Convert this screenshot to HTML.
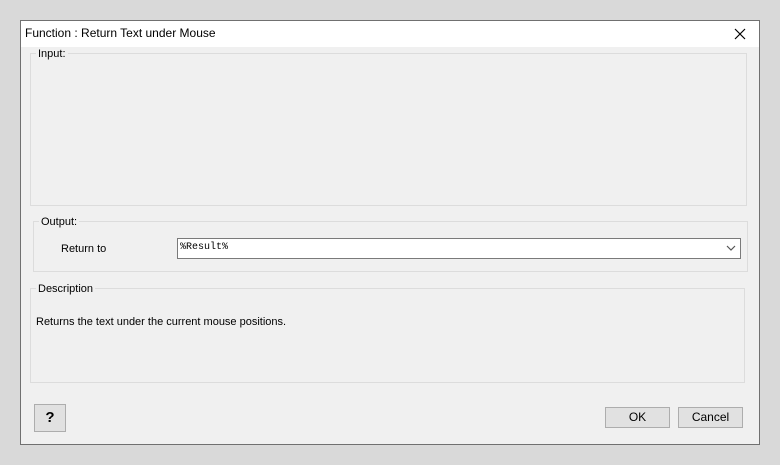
<!DOCTYPE html>
<html><head><style>
*{margin:0;padding:0;box-sizing:border-box}
body{width:780px;height:465px;background:#d9d9d9;position:relative;overflow:hidden;font-family:"Liberation Sans",sans-serif;font-size:11px;color:#000}
.win{position:absolute;left:20px;top:20px;width:740px;height:425px;border:1px solid #707070;background:#f0f0f0}
.title{position:absolute;left:0;top:0;width:738px;height:26px;background:#fff}
.title span{position:absolute;left:4px;top:5px;font-size:12px}
.gb{position:absolute;border:1px solid #dcdcdc}
.gb .l{position:absolute;left:5px;top:-6px;background:#f0f0f0;padding:0 2px;font-size:11px}
.btn{position:absolute;border:1px solid #adadad;background:#e1e1e1;text-align:center;font-size:11px}
</style></head><body>
<div class="win">
<div class="title"><span>Function : Return Text under Mouse</span>
<svg style="position:absolute;left:713px;top:7px" width="12" height="12"><path d="M1 1L11 11M11 1L1 11" stroke="#000" stroke-width="1.2"/></svg></div>
</div>
<div class="gb" style="left:30px;top:53px;width:717px;height:153px"><span class="l">Input:</span></div>
<div class="gb" style="left:33px;top:221px;width:715px;height:51px"><span class="l">Output:</span></div>
<div style="position:absolute;left:61px;top:243px">Return to</div>
<div style="position:absolute;left:177px;top:238px;width:564px;height:21px;border:1px solid #7a7a7a;background:#fff">
<span style="position:absolute;left:2px;top:3px;font-family:'Liberation Mono',monospace;font-size:10px">%Result%</span>
<svg style="position:absolute;left:548px;top:6px" width="10" height="7"><path d="M1 1L5 5L9 1" stroke="#555" fill="none" stroke-width="1.2"/></svg></div>
<div class="gb" style="left:30px;top:288px;width:715px;height:95px"><span class="l">Description</span></div>
<div style="position:absolute;left:36px;top:316px">Returns the text under the current mouse positions.</div>
<div class="btn" style="left:34px;top:404px;width:32px;height:28px;font-weight:bold;font-size:15px;line-height:26px">?</div>
<div class="btn" style="left:605px;top:407px;width:65px;height:21px;line-height:19px;font-size:12px">OK</div>
<div class="btn" style="left:678px;top:407px;width:65px;height:21px;line-height:19px;font-size:12px">Cancel</div>
</body></html>
